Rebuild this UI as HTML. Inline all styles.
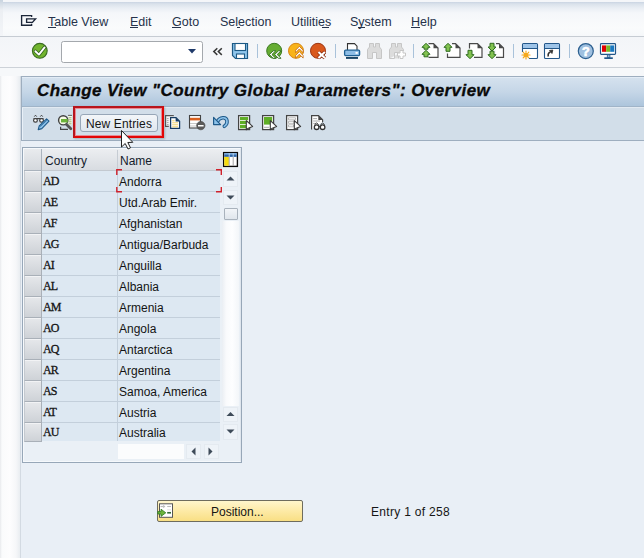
<!DOCTYPE html>
<html><head><meta charset="utf-8">
<style>
*{margin:0;padding:0;box-sizing:border-box}
html,body{width:644px;height:558px;overflow:hidden;background:#f8f9fb;font-family:"Liberation Sans",sans-serif;font-size:12px;color:#222}
.a{position:absolute}
svg{position:absolute;overflow:visible}
.m{position:absolute;top:14px;font-size:12.5px;line-height:16px;color:#26324a;white-space:pre}
.u{position:absolute;height:1px;background:#26324a}
.sep{position:absolute;top:44px;width:1px;height:14px;background:#a9c2da}
.txt{position:absolute;white-space:pre;line-height:14px}
</style></head><body>
<!-- menubar -->
<div class="a" style="left:0;top:0;width:644px;height:37px;background:linear-gradient(#f4f6f9 0,#f4f6f9 2px,#c9d4e2 2px,#dae2eb 4px,#e9eef4 8px,#f5f7fa 13px,#fafbfc 28px,#f6f8fa 36px);border-bottom:1px solid #c6ccd3"></div>
<div class="a" style="left:0;top:0;width:3px;height:36px;background:linear-gradient(#c9d4e0,#eceff3 10px,#f3f5f8 36px)"></div>
<svg style="left:0;top:0" width="40" height="30">
  <path d="M31.6,17 V15.6 H21.6 V25.2 H31.6 V23.8" fill="none" stroke="#1c2639" stroke-width="1.35"/>
  <path d="M26.6,18.8 H35.6 L32.4,22.4 H26.6 Z" fill="none" stroke="#1c2639" stroke-width="1.35"/>
</svg>
<div class="m" style="left:48px">Table View</div><div class="u" style="left:48px;top:27px;width:8px"></div>
<div class="m" style="left:130px">Edit</div><div class="u" style="left:130px;top:27px;width:8px"></div>
<div class="m" style="left:172px">Goto</div><div class="u" style="left:172px;top:27px;width:9px"></div>
<div class="m" style="left:220px">Selection</div><div class="u" style="left:237px;top:27px;width:3px"></div>
<div class="m" style="left:291px">Utilities</div><div class="u" style="left:322px;top:27px;width:7px"></div>
<div class="m" style="left:350px">System</div><div class="u" style="left:358px;top:27px;width:7px"></div>
<div class="m" style="left:411px">Help</div><div class="u" style="left:411px;top:27px;width:9px"></div>

<!-- system toolbar -->
<div class="a" style="left:0;top:37px;width:644px;height:31px;background:linear-gradient(#f3f5f8,#f7f8fa);border-bottom:1px solid #cdd2d8"></div>
<div class="a" style="left:0;top:68px;width:644px;height:8px;background:#f6f8fa"></div>
<svg style="left:0;top:0" width="644" height="70">
  <!-- check -->
  <circle cx="39.8" cy="50.8" r="7.4" fill="#72b52e" stroke="#3a6c22" stroke-width="1.1"/>
  <path d="M35.4,51.2 L38.9,54.6 L44.6,47.4" fill="none" stroke="#2f5e1c" stroke-width="3.4" stroke-linecap="round" stroke-linejoin="round"/>
  <path d="M35.4,51.2 L38.9,54.6 L44.6,47.4" fill="none" stroke="#fff" stroke-width="1.9" stroke-linecap="round" stroke-linejoin="round"/>
  <!-- combo -->
  <rect x="61.5" y="41.5" width="141" height="21" rx="2" fill="#fff" stroke="#a4a8ad"/>
  <path d="M188,49 H196 L192,53.5 Z" fill="#1f3a6a"/>
  <!-- << -->
  <path d="M217.3,48.3 L213.8,51.6 L217.3,54.9 M221.8,48.3 L218.3,51.6 L221.8,54.9" fill="none" stroke="#383838" stroke-width="1.5"/>
  <!-- save -->
  <path d="M232.5,43.5 H247.5 V58.5 H235.5 L232.5,55.5 Z" fill="#8fc6ec" stroke="#1d5a85" stroke-width="1.2"/>
  <rect x="235" y="43.5" width="10.5" height="7" fill="#fff" stroke="#1d5a85" stroke-width="1.1"/>
  <rect x="236.5" y="54" width="8" height="4.5" fill="#fff" stroke="#1d5a85" stroke-width="1.1"/>
  <!-- green back -->
  <circle cx="274.2" cy="50.8" r="7.5" fill="#66ad33" stroke="#3b7a22" stroke-width="1"/>
  <path d="M273.2,50.8 L269.3,54.55 L273.2,58.3 H275.8 L271.90000000000003,54.55 L275.8,50.8 Z M278.5,50.8 L274.6,54.55 L278.5,58.3 H281.1 L277.20000000000005,54.55 L281.1,50.8 Z" fill="#fff" stroke="#2f6a1c" stroke-width="0.9" stroke-linejoin="miter"/>
  <!-- orange exit -->
  <circle cx="296" cy="50.8" r="7.5" fill="#f8b31a" stroke="#d68516" stroke-width="1"/>
  <path d="M295.6,50.199999999999996 L299.35,46.3 L303.1,50.199999999999996 V52.8 L299.35,48.9 L295.6,52.8 Z M295.6,55.5 L299.35,51.6 L303.1,55.5 V58.1 L299.35,54.2 L295.6,58.1 Z" fill="#fff" stroke="#c8701a" stroke-width="0.9"/>
  <!-- red cancel -->
  <circle cx="318" cy="50.8" r="7.5" fill="#d9581c" stroke="#9c3512" stroke-width="1"/>
  <path d="M318.5,52 L324.8,58 M324.8,52 L318.5,58" fill="none" stroke="#8a2a0c" stroke-width="3.6"/>
  <path d="M318.5,52 L324.8,58 M324.8,52 L318.5,58" fill="none" stroke="#fff" stroke-width="2"/>
  <!-- printer -->
  <path d="M347.5,50 V43.6 H354.5 L357,46.2 V50" fill="#fff" stroke="#333" stroke-width="1.1"/>
  <rect x="344.6" y="50.2" width="15" height="5.4" rx="1" fill="#8dbde6" stroke="#1f6194" stroke-width="1.3"/>
  <rect x="355.5" y="52" width="2.3" height="1.8" fill="#fff"/>
  <rect x="346" y="57" width="12" height="1.9" fill="#1a4566"/>
  <!-- binoculars grey -->
  <path d="M367.5,58.5 V49.5 L369.5,47 V43.5 H373.5 V47 H375.5 V43.5 H379.5 V47 L381.5,49.5 V58.5 H376.5 V52.5 H372.5 V58.5 Z" fill="#dcdcdc" stroke="#c6c6c6" stroke-width="1"/>
  <path d="M389.5,58.5 V49.5 L391.5,47 V43.5 H395.5 V47 H397.5 V43.5 H401.5 V47 L403.5,49.5 V51 M398.5,58.5 V52.5 H394.5 V58.5 H389.5" fill="#dcdcdc" stroke="#c6c6c6" stroke-width="1"/>
  <path d="M400,50.5 H403 V53 H405.5 V56 H403 V58.5 H400 V56 H397.5 V53 H400 Z" fill="#fff" stroke="#c6c6c6" stroke-width="1"/>
  <!-- page nav icons -->
  <g fill="#fff" stroke="#4a4a4a" stroke-width="1.2">
    <path d="M428.5,43.6 H433.5 L438,48 V57.4 H428.5"/>
    <path d="M452,43.6 H455.5 L460,48 V57.4 H447.5 V53.5"/>
    <path d="M469.5,48.5 V43.6 H477.5 L482,48 V57.4 H474"/>
    <path d="M496,43.6 H499 L503.5,48 V57.4 H496"/>
  </g>
  <path d="M433.5,43.5 L438.3,48.3 H433.5 Z M455.5,43.5 L460.3,48.3 H455.5 Z M477.5,43.5 L482.3,48.3 H477.5 Z M499,43.5 L503.8,48.3 H499 Z" fill="#4a4a4a"/>
  <g fill="#82c250" stroke="#2e6b1f" stroke-width="1">
    <path d="M426,43.3 L430,47.3 H428 V49.2 H424 V47.3 H422 Z"/>
    <path d="M426,50.3 L430,54.3 H428 V56.8 H424 V54.3 H422 Z"/>
    <path d="M448,43.3 L452,47.3 H450 V51.3 H446 V47.3 H444 Z"/>
    <path d="M470,58.7 L474,54.7 H472 V50.3 H468 V54.7 H466 Z"/>
    <path d="M492,51 L496,47 H494 V43.3 H490 V47 H488 Z"/>
    <path d="M492,58.7 L496,54.7 H494 V51.2 H490 V54.7 H488 Z"/>
  </g>
  <!-- window sun -->
  <path d="M522.5,52 V44.5 Q522.5,43.5 523.5,43.5 H536.5 Q537.5,43.5 537.5,44.5 V57.5 Q537.5,58.5 536.5,58.5 H529" fill="#fff" stroke="#23578a" stroke-width="1.1"/>
  <rect x="523" y="44" width="14" height="4.2" fill="#9ec4e8"/>
  <line x1="522.5" y1="48.5" x2="537.5" y2="48.5" stroke="#23578a" stroke-width="1"/>
  <circle cx="526" cy="55" r="2.6" fill="#f5a81a"/>
  <g stroke="#f5a81a" stroke-width="1.2" stroke-linecap="round"><path d="M526,51 V52 M526,58 V59 M522,55 H523 M529,55 H530 M523.2,52.2 L523.8,52.8 M528.2,57.2 L528.8,57.8 M528.8,52.2 L528.2,52.8 M523.8,57.2 L523.2,57.8"/></g>
  <!-- window arrow -->
  <path d="M544.5,44.5 Q544.5,43.5 545.5,43.5 H558.5 Q559.5,43.5 559.5,44.5 V57.5 Q559.5,58.5 558.5,58.5 H545.5 Q544.5,58.5 544.5,57.5 Z" fill="#fff" stroke="#23578a" stroke-width="1.1"/>
  <rect x="545" y="44" width="14" height="4.2" fill="#9ec4e8"/>
  <line x1="544.5" y1="48.5" x2="559.5" y2="48.5" stroke="#23578a" stroke-width="1"/>
  <path d="M548.3,56.5 Q547.5,53 550.5,52" fill="none" stroke="#333" stroke-width="1.6"/>
  <path d="M549.5,50.5 L552.8,50 L552,53.5 Z" fill="#333" stroke="#333" stroke-width="0.8"/>
  <!-- help -->
  <circle cx="585.8" cy="51.1" r="7.5" fill="#9fc0e0" stroke="#2c5f8f" stroke-width="1.2"/>
  <text x="585.9" y="55.9" font-family="Liberation Sans" font-weight="bold" font-size="12.5" fill="#fff" stroke="#fff" stroke-width="0.7" text-anchor="middle">?</text>
  <!-- monitor -->
  <rect x="600.5" y="43.6" width="15" height="10.8" rx="0.8" fill="#fff" stroke="#23578a" stroke-width="1.2"/>
  <rect x="602" y="45.4" width="4.2" height="6.4" fill="#e00000"/><rect x="606.2" y="45.4" width="4" height="6.4" fill="#7ab828"/><rect x="610.2" y="45.4" width="4" height="6.4" fill="#1a78c0"/>
  <rect x="607.3" y="54.8" width="2.6" height="2.6" fill="#9fc0e0" stroke="#23578a" stroke-width="0.8"/>
  <rect x="604.3" y="57.3" width="8.5" height="1.7" fill="#23578a"/>
</svg>
<div class="sep" style="left:257px"></div>
<div class="sep" style="left:335px"></div>
<div class="sep" style="left:413px"></div>
<div class="sep" style="left:513px"></div>
<div class="sep" style="left:569px"></div>

<!-- main panel -->
<div class="a" style="left:0;top:76px;width:20px;height:482px;background:linear-gradient(90deg,#e8eaed 0,#fafbfc 2px,#fdfdfe 10px,#f6f7f9 16px,#e9edf1 20px)"></div>
<div class="a" style="left:20px;top:76px;width:624px;height:482px;background:#e9eff6;border-left:1px solid #d3dae2"></div>
<div class="a" style="left:21px;top:76px;width:623px;height:65px;border:1px solid #9eaebf;border-right:none;background:#d2dee9"></div>
<div class="a" style="left:22px;top:77px;width:622px;height:30px;background:linear-gradient(#d4e1ee,#c5d6e7 50%,#adc5dc);border-bottom:1px solid #a0b4c8;border-top:1px solid #e2ecf6"></div>
<div class="a" style="left:22px;top:107px;width:1px;height:33px;background:#e8f0f8"></div>
<div class="a" style="left:22px;top:107px;width:622px;height:1px;background:#e2eaf2"></div>
<div class="txt" style="left:37px;top:82px;font-size:17px;line-height:18px;font-weight:bold;font-style:italic;color:#0a0a0a;letter-spacing:0.43px;-webkit-text-stroke:0.3px #0a0a0a">Change View "Country Global Parameters": Overview</div>

<!-- app toolbar icons -->
<svg style="left:0;top:0" width="340" height="140">
  <!-- glasses + pencil -->
  <g fill="none" stroke="#404040" stroke-width="1.2">
    <path d="M33.6,118.6 H43.4"/>
    <rect x="33.6" y="118.6" width="3.7" height="3.6" rx="1.6" fill="#fff"/>
    <rect x="39.7" y="118.6" width="3.7" height="3.6" rx="1.6" fill="#fff"/>
    <path d="M34.3,116.6 L35.5,115.2 L36.7,116.6 M40.3,116.6 L41.5,115.2 L42.7,116.6" stroke-width="1"/>
  </g>
  <path d="M38.2,129.6 L39.2,126 L46.6,118.8 L49,121.2 L41.8,128.6 Z" fill="#8cc2ea" stroke="#1f5a8a" stroke-width="1.1" stroke-linejoin="round"/>
  <path d="M40.2,126.6 L47.4,119.8" stroke="#2a6a9c" stroke-width="0.8"/>
  <!-- display w/ magnifier -->
  <path d="M68,115.4 H72" stroke="#444" stroke-width="1"/>
  <rect x="68" y="115.8" width="4" height="9" fill="#f4f7e8"/>
  <path d="M68.5,117.8 H71.5 M68.5,119.8 H71.5 M68.5,121.8 H71.5 M68.5,123.8 H71.5" stroke="#8fae6a" stroke-width="0.9"/>
  <path d="M60.6,126.8 V129.4 H68" fill="none" stroke="#444" stroke-width="1.2"/>
  <circle cx="63.2" cy="120.3" r="4.6" fill="#f7fbe6" stroke="#404040" stroke-width="1.4"/>
  <rect x="61" y="119" width="6.8" height="3.4" fill="#6cb43a"/>
  <path d="M66.6,124.6 L70.8,128.8" stroke="#555" stroke-width="2.8" stroke-linecap="round"/>
  <!-- copy -->
  <path d="M173.8,115.6 H165.6 V126.4 H168.8" fill="#f4f6f8" stroke="#555" stroke-width="1.1"/>
  <path d="M166.8,118.6 H168.6 M166.8,120.6 H168.6 M166.8,122.6 H168.6 M166.8,124.6 H168.6" stroke="#9a9a9a" stroke-width="0.9"/>
  <path d="M170.6,117.6 H176 L179.6,121.2 V128.4 H170.6 Z" fill="#fff" stroke="#163c63" stroke-width="1.25"/>
  <path d="M175.6,117.4 L179.8,121.6 H175.6 Z" fill="#163c63"/>
  <path d="M172.2,120.8 H174.6 M172.2,122.8 H178 M172.2,124.8 H178 M172.2,126.8 H178" stroke="#f0d46a" stroke-width="1"/>
  <!-- delete row -->
  <rect x="189.5" y="115.5" width="11" height="12.5" fill="#fff" stroke="#444" stroke-width="1.1"/>
  <rect x="190" y="117.8" width="10" height="2.6" fill="#d9601f"/>
  <path d="M190,123.5 H197 M190,126 H196" stroke="#bbb" stroke-width="0.8"/>
  <circle cx="200.8" cy="125.6" r="4.2" fill="#5a5a5a" stroke="#444" stroke-width="0.6"/>
  <rect x="198" y="125" width="5.6" height="1.5" fill="#fff"/>
  <!-- undo -->
  <path d="M217.5,121.5 C219.5,117 226.5,116.2 227,121 C227.3,123.8 225.5,125.5 224.3,126.3" fill="none" stroke="#1f5a8a" stroke-width="3.6" stroke-linecap="round"/>
  <path d="M217.5,121.5 C219.5,117 226.5,116.2 227,121 C227.3,123.8 225.5,125.5 224.3,126.3" fill="none" stroke="#8cc2ea" stroke-width="1.6" stroke-linecap="round"/>
  <path d="M213.6,117.4 V124.6 H220.6 Z" fill="#8cc2ea" stroke="#1f5a8a" stroke-width="1.2" stroke-linejoin="round"/>
  <!-- select all -->
  <rect x="238.6" y="115.6" width="11" height="14" fill="#fff" stroke="#444" stroke-width="1.25"/>
  <rect x="240" y="117" width="8.2" height="3.2" fill="#5fae26"/><rect x="240" y="121" width="8.2" height="3.2" fill="#5fae26"/><rect x="240" y="125" width="8.2" height="3.3" fill="#5fae26"/>
  <path d="M246.3,120.6 V129.79999999999998 L248.3,128.2 L252.60000000000002,126.39999999999999 Z" fill="#fff" stroke="#3a3a3a" stroke-width="1.1" stroke-linejoin="round"/>
  <rect x="262.6" y="115.6" width="11" height="14" fill="#fff" stroke="#444" stroke-width="1.25"/>
  <rect x="264" y="117" width="8.2" height="7.6" fill="#5fae26"/>
  <path d="M264,127.3 H269" stroke="#aaa" stroke-width="1"/>
  <path d="M270.3,120.6 V129.79999999999998 L272.3,128.2 L276.6,126.39999999999999 Z" fill="#fff" stroke="#3a3a3a" stroke-width="1.1" stroke-linejoin="round"/>
  <rect x="286.6" y="115.6" width="11" height="14" fill="#fff" stroke="#444" stroke-width="1.25"/>
  <path d="M288.5,117.8 H295.5 V119.8 H288.5 Z M288.5,121.3 H294 V123.3 H288.5 Z M288.5,124.8 H293.5 V126.8 H288.5 Z" fill="none" stroke="#a8a8a8" stroke-width="0.8"/>
  <path d="M294.3,120.6 V129.79999999999998 L296.3,128.2 L300.6,126.39999999999999 Z" fill="#fff" stroke="#3a3a3a" stroke-width="1.1" stroke-linejoin="round"/>
  <path d="M311.6,129.6 V115.6 H318.5 L322.6,119.7 V122" fill="#fff" stroke="#444" stroke-width="1.2"/>
  <path d="M318.3,115.4 L322.8,119.9 H318.3 Z" fill="#444"/>
  <path d="M313.2,118.6 H317 M313.2,121 H320 M313.2,123.4 H316" stroke="#a0a0a0" stroke-width="0.9"/>
  <path d="M314.6,124.6 L316.6,123 L318.6,124.6 M320.6,124.6 L322.6,123 L324.6,124.6" fill="none" stroke="#333" stroke-width="1"/>
  <circle cx="316.6" cy="127.2" r="2.3" fill="#fff" stroke="#333" stroke-width="1.3"/>
  <circle cx="322.6" cy="127.2" r="2.3" fill="#fff" stroke="#333" stroke-width="1.3"/>
  <path d="M318.9,126.4 H320.3" stroke="#333" stroke-width="1"/>
</svg>
<!-- New Entries -->
<div class="a" style="left:73px;top:106px;width:91px;height:32px;border:2px solid;border-color:#b8141c #e20606 #e20606 #b8141c;box-shadow:inset 0 0 0 1px rgba(240,110,120,0.75),1px 1px 2px rgba(0,0,0,0.22)"></div>
<div class="a" style="left:80px;top:114px;width:78px;height:18px;border:1px solid #97a6b7;border-radius:3px;background:linear-gradient(#f3f6f9,#dfe6ee)"></div>
<div class="txt" style="left:86px;top:117px;font-size:12px;color:#151515;letter-spacing:0.12px">New Entries</div>

<!-- table -->
<div class="a" style="left:22px;top:147px;width:220px;height:316px;border:1px solid #97a7b8;background:#eaf0f6"></div>
<div class="a" style="left:23px;top:148px;width:218px;height:314px;border:1px solid #f6f9fc;border-right-color:#dfe6ee"></div>
<div class="a" style="left:24px;top:149px;width:18px;height:22px;background:linear-gradient(#e9ebee,#d4d8dd);border-right:1px solid #aab3bd;border-bottom:1px solid #aab3bd"></div>
<div class="a" style="left:42px;top:149px;width:180px;height:22px;background:linear-gradient(#eceef1,#d8dce1);border-bottom:1px solid #c3c9d0"></div>
<div class="a" style="left:117px;top:150px;width:1px;height:20px;background:#c6ccd3"></div>
<div class="txt" style="left:45px;top:154px;font-size:12px;color:#141c2c">Country</div>
<div class="txt" style="left:120px;top:154px;font-size:12px;color:#141c2c">Name</div>

<div class="a" style="left:24px;top:171px;width:18px;height:21px;background:linear-gradient(#e6e8eb,#ced2d7);border-right:1px solid #a9b0b8;border-bottom:1px solid #a9b0b8;border-left:1px solid #c4c9cf;box-shadow:inset 0 1px 0 #f2f3f5"></div>
<div class="a" style="left:42px;top:171px;width:178px;height:21px;background:#dde8f2;border-bottom:1px solid #c3cfdb;"></div>
<div class="a" style="left:117px;top:171px;width:1px;height:21px;background:#c3cfdb"></div>
<div class="txt" style="left:43px;top:174px;font-family:'Liberation Serif';font-size:12px;color:#141414;letter-spacing:-0.9px;-webkit-text-stroke:0.3px #141414">AD</div>
<div class="txt" style="left:119px;top:175px;font-size:12px;color:#141414">Andorra</div>
<div class="a" style="left:24px;top:192px;width:18px;height:21px;background:linear-gradient(#e6e8eb,#ced2d7);border-right:1px solid #a9b0b8;border-bottom:1px solid #a9b0b8;border-left:1px solid #c4c9cf;box-shadow:inset 0 1px 0 #f2f3f5"></div>
<div class="a" style="left:42px;top:192px;width:178px;height:21px;background:#dde8f2;border-bottom:1px solid #c3cfdb;"></div>
<div class="a" style="left:117px;top:192px;width:1px;height:21px;background:#c3cfdb"></div>
<div class="txt" style="left:43px;top:195px;font-family:'Liberation Serif';font-size:12px;color:#141414;letter-spacing:-0.9px;-webkit-text-stroke:0.3px #141414">AE</div>
<div class="txt" style="left:119px;top:196px;font-size:12px;color:#141414">Utd.Arab Emir.</div>
<div class="a" style="left:24px;top:213px;width:18px;height:21px;background:linear-gradient(#e6e8eb,#ced2d7);border-right:1px solid #a9b0b8;border-bottom:1px solid #a9b0b8;border-left:1px solid #c4c9cf;box-shadow:inset 0 1px 0 #f2f3f5"></div>
<div class="a" style="left:42px;top:213px;width:178px;height:21px;background:#dde8f2;border-bottom:1px solid #c3cfdb;"></div>
<div class="a" style="left:117px;top:213px;width:1px;height:21px;background:#c3cfdb"></div>
<div class="txt" style="left:43px;top:216px;font-family:'Liberation Serif';font-size:12px;color:#141414;letter-spacing:-0.9px;-webkit-text-stroke:0.3px #141414">AF</div>
<div class="txt" style="left:119px;top:217px;font-size:12px;color:#141414">Afghanistan</div>
<div class="a" style="left:24px;top:234px;width:18px;height:21px;background:linear-gradient(#e6e8eb,#ced2d7);border-right:1px solid #a9b0b8;border-bottom:1px solid #a9b0b8;border-left:1px solid #c4c9cf;box-shadow:inset 0 1px 0 #f2f3f5"></div>
<div class="a" style="left:42px;top:234px;width:178px;height:21px;background:#dde8f2;border-bottom:1px solid #c3cfdb;"></div>
<div class="a" style="left:117px;top:234px;width:1px;height:21px;background:#c3cfdb"></div>
<div class="txt" style="left:43px;top:237px;font-family:'Liberation Serif';font-size:12px;color:#141414;letter-spacing:-0.9px;-webkit-text-stroke:0.3px #141414">AG</div>
<div class="txt" style="left:119px;top:238px;font-size:12px;color:#141414">Antigua/Barbuda</div>
<div class="a" style="left:24px;top:255px;width:18px;height:21px;background:linear-gradient(#e6e8eb,#ced2d7);border-right:1px solid #a9b0b8;border-bottom:1px solid #a9b0b8;border-left:1px solid #c4c9cf;box-shadow:inset 0 1px 0 #f2f3f5"></div>
<div class="a" style="left:42px;top:255px;width:178px;height:21px;background:#dde8f2;border-bottom:1px solid #c3cfdb;"></div>
<div class="a" style="left:117px;top:255px;width:1px;height:21px;background:#c3cfdb"></div>
<div class="txt" style="left:43px;top:258px;font-family:'Liberation Serif';font-size:12px;color:#141414;letter-spacing:-0.9px;-webkit-text-stroke:0.3px #141414">AI</div>
<div class="txt" style="left:119px;top:259px;font-size:12px;color:#141414">Anguilla</div>
<div class="a" style="left:24px;top:276px;width:18px;height:21px;background:linear-gradient(#e6e8eb,#ced2d7);border-right:1px solid #a9b0b8;border-bottom:1px solid #a9b0b8;border-left:1px solid #c4c9cf;box-shadow:inset 0 1px 0 #f2f3f5"></div>
<div class="a" style="left:42px;top:276px;width:178px;height:21px;background:#dde8f2;border-bottom:1px solid #c3cfdb;"></div>
<div class="a" style="left:117px;top:276px;width:1px;height:21px;background:#c3cfdb"></div>
<div class="txt" style="left:43px;top:279px;font-family:'Liberation Serif';font-size:12px;color:#141414;letter-spacing:-0.9px;-webkit-text-stroke:0.3px #141414">AL</div>
<div class="txt" style="left:119px;top:280px;font-size:12px;color:#141414">Albania</div>
<div class="a" style="left:24px;top:297px;width:18px;height:21px;background:linear-gradient(#e6e8eb,#ced2d7);border-right:1px solid #a9b0b8;border-bottom:1px solid #a9b0b8;border-left:1px solid #c4c9cf;box-shadow:inset 0 1px 0 #f2f3f5"></div>
<div class="a" style="left:42px;top:297px;width:178px;height:21px;background:#dde8f2;border-bottom:1px solid #c3cfdb;"></div>
<div class="a" style="left:117px;top:297px;width:1px;height:21px;background:#c3cfdb"></div>
<div class="txt" style="left:43px;top:300px;font-family:'Liberation Serif';font-size:12px;color:#141414;letter-spacing:-0.9px;-webkit-text-stroke:0.3px #141414">AM</div>
<div class="txt" style="left:119px;top:301px;font-size:12px;color:#141414">Armenia</div>
<div class="a" style="left:24px;top:318px;width:18px;height:21px;background:linear-gradient(#e6e8eb,#ced2d7);border-right:1px solid #a9b0b8;border-bottom:1px solid #a9b0b8;border-left:1px solid #c4c9cf;box-shadow:inset 0 1px 0 #f2f3f5"></div>
<div class="a" style="left:42px;top:318px;width:178px;height:21px;background:#dde8f2;border-bottom:1px solid #c3cfdb;"></div>
<div class="a" style="left:117px;top:318px;width:1px;height:21px;background:#c3cfdb"></div>
<div class="txt" style="left:43px;top:321px;font-family:'Liberation Serif';font-size:12px;color:#141414;letter-spacing:-0.9px;-webkit-text-stroke:0.3px #141414">AO</div>
<div class="txt" style="left:119px;top:322px;font-size:12px;color:#141414">Angola</div>
<div class="a" style="left:24px;top:339px;width:18px;height:21px;background:linear-gradient(#e6e8eb,#ced2d7);border-right:1px solid #a9b0b8;border-bottom:1px solid #a9b0b8;border-left:1px solid #c4c9cf;box-shadow:inset 0 1px 0 #f2f3f5"></div>
<div class="a" style="left:42px;top:339px;width:178px;height:21px;background:#dde8f2;border-bottom:1px solid #c3cfdb;"></div>
<div class="a" style="left:117px;top:339px;width:1px;height:21px;background:#c3cfdb"></div>
<div class="txt" style="left:43px;top:342px;font-family:'Liberation Serif';font-size:12px;color:#141414;letter-spacing:-0.9px;-webkit-text-stroke:0.3px #141414">AQ</div>
<div class="txt" style="left:119px;top:343px;font-size:12px;color:#141414">Antarctica</div>
<div class="a" style="left:24px;top:360px;width:18px;height:21px;background:linear-gradient(#e6e8eb,#ced2d7);border-right:1px solid #a9b0b8;border-bottom:1px solid #a9b0b8;border-left:1px solid #c4c9cf;box-shadow:inset 0 1px 0 #f2f3f5"></div>
<div class="a" style="left:42px;top:360px;width:178px;height:21px;background:#dde8f2;border-bottom:1px solid #c3cfdb;"></div>
<div class="a" style="left:117px;top:360px;width:1px;height:21px;background:#c3cfdb"></div>
<div class="txt" style="left:43px;top:363px;font-family:'Liberation Serif';font-size:12px;color:#141414;letter-spacing:-0.9px;-webkit-text-stroke:0.3px #141414">AR</div>
<div class="txt" style="left:119px;top:364px;font-size:12px;color:#141414">Argentina</div>
<div class="a" style="left:24px;top:381px;width:18px;height:21px;background:linear-gradient(#e6e8eb,#ced2d7);border-right:1px solid #a9b0b8;border-bottom:1px solid #a9b0b8;border-left:1px solid #c4c9cf;box-shadow:inset 0 1px 0 #f2f3f5"></div>
<div class="a" style="left:42px;top:381px;width:178px;height:21px;background:#dde8f2;border-bottom:1px solid #c3cfdb;"></div>
<div class="a" style="left:117px;top:381px;width:1px;height:21px;background:#c3cfdb"></div>
<div class="txt" style="left:43px;top:384px;font-family:'Liberation Serif';font-size:12px;color:#141414;letter-spacing:-0.9px;-webkit-text-stroke:0.3px #141414">AS</div>
<div class="txt" style="left:119px;top:385px;font-size:12px;color:#141414">Samoa, America</div>
<div class="a" style="left:24px;top:402px;width:18px;height:21px;background:linear-gradient(#e6e8eb,#ced2d7);border-right:1px solid #a9b0b8;border-bottom:1px solid #a9b0b8;border-left:1px solid #c4c9cf;box-shadow:inset 0 1px 0 #f2f3f5"></div>
<div class="a" style="left:42px;top:402px;width:178px;height:21px;background:#dde8f2;border-bottom:1px solid #c3cfdb;"></div>
<div class="a" style="left:117px;top:402px;width:1px;height:21px;background:#c3cfdb"></div>
<div class="txt" style="left:43px;top:405px;font-family:'Liberation Serif';font-size:12px;color:#141414;letter-spacing:-0.9px;-webkit-text-stroke:0.3px #141414">AT</div>
<div class="txt" style="left:119px;top:406px;font-size:12px;color:#141414">Austria</div>
<div class="a" style="left:24px;top:423px;width:18px;height:19px;background:linear-gradient(#e6e8eb,#ced2d7);border-right:1px solid #a9b0b8;border-bottom:1px solid #a9b0b8;border-left:1px solid #c4c9cf;box-shadow:inset 0 1px 0 #f2f3f5"></div>
<div class="a" style="left:42px;top:423px;width:178px;height:18px;background:#dde8f2;"></div>
<div class="a" style="left:117px;top:423px;width:1px;height:18px;background:#c3cfdb"></div>
<div class="txt" style="left:43px;top:425px;font-family:'Liberation Serif';font-size:12px;color:#141414;letter-spacing:-0.9px;-webkit-text-stroke:0.3px #141414">AU</div>
<div class="txt" style="left:119px;top:426px;font-size:12px;color:#141414">Australia</div>
<!-- focus brackets -->
<svg style="left:0;top:0" width="250" height="200">
  <path d="M122,169.8 H116.8 V175 M116.8,187 V191.8 H122 M216,169.8 H221.3 V175 M221.3,187 V191.8 H216" fill="none" stroke="#d0212b" stroke-width="1.4"/>
</svg>
<!-- column config icon -->
<svg style="left:0;top:0" width="250" height="200">
  <rect x="223.6" y="152.6" width="13.8" height="13.8" fill="#fff" stroke="#0a0a0a" stroke-width="1.35"/>
  <rect x="224.3" y="153.3" width="12.4" height="3.6" fill="#2f66a8"/>
  <rect x="224.3" y="153.3" width="12.4" height="1.2" fill="#8fc0ee"/>
  <rect x="224.3" y="156.9" width="4.6" height="8.8" fill="#f6dc10"/>
  <path d="M229.2,157 V165.8 M233.2,157 V165.8" stroke="#9a9a9a" stroke-width="0.9"/>
  <path d="M229.2,153.2 V157 M233.2,153.2 V157" stroke="#cfe3f5" stroke-width="0.8"/>
</svg>
<!-- vertical scrollbar -->
<div class="a" style="left:222px;top:221px;width:17px;height:185px;background:linear-gradient(90deg,#eaeef3,#f9fafc 25%,#fdfeff 60%,#f3f6f9)"></div>
<div class="a" style="left:223px;top:171px;width:15px;height:16px;background:#eef3f8;border:1px solid #e4eaf0"></div>
<div class="a" style="left:223px;top:190px;width:15px;height:15px;background:#eef3f8;border:1px solid #e4eaf0"></div>
<div class="a" style="left:224px;top:208px;width:14px;height:12px;background:linear-gradient(#f2f5f8,#e0e6ec);border:1px solid #a9b2bc;border-radius:1px"></div>
<div class="a" style="left:223px;top:407px;width:15px;height:15px;background:#eef3f8;border:1px solid #e4eaf0"></div>
<div class="a" style="left:223px;top:424px;width:15px;height:16px;background:#eef3f8;border:1px solid #e4eaf0"></div>
<svg style="left:0;top:0" width="250" height="470">
  <path d="M226.5,180.5 H234.5 L230.5,176.5 Z M226.5,195.5 H234.5 L230.5,199.5 Z M226.5,416 H234.5 L230.5,412 Z M226.5,429.5 H234.5 L230.5,433.5 Z" fill="#3e4b59"/>
</svg>
<!-- horizontal scrollbar -->
<div class="a" style="left:118px;top:444px;width:66px;height:15px;background:#fbfcfd"></div>
<div class="a" style="left:186px;top:444px;width:15px;height:15px;background:#eef3f8;border:1px solid #e4eaf0"></div>
<div class="a" style="left:204px;top:444px;width:15px;height:15px;background:#eef3f8;border:1px solid #e4eaf0"></div>
<svg style="left:0;top:0" width="250" height="470">
  <path d="M195.5,447.5 V455.5 L191.5,451.5 Z M208.5,447.5 V455.5 L212.5,451.5 Z" fill="#3e4b59"/>
</svg>
<!-- position button -->
<div class="a" style="left:157px;top:500px;width:146px;height:22px;border:1px solid #6e6c5e;border-radius:2px;background:linear-gradient(#fff6cc,#fdeaa6 50%,#f9df84)"></div>
<svg style="left:0;top:0" width="200" height="530">
  <rect x="159.5" y="503.8" width="13" height="13.5" fill="#fff" stroke="#555" stroke-width="1"/>
  <path d="M160.5,506.5 H163.5" stroke="#bbb" stroke-width="1.2"/>
  <path d="M163.2,504.8 L165.4,506.5 L163.2,508.2 Z" fill="#bbb"/>
  <path d="M167.2,506.5 H171" stroke="#bbb" stroke-width="1.1"/>
  <path d="M167.2,509.5 H171 M167.2,511 H171" stroke="#e4e4e4" stroke-width="0.8"/>
  <path d="M157.8,511.6 H161 V509.2 L165.8,512.8 L161,516.4 V514 H157.8 Z" fill="#6cb43c" stroke="#2f7a22" stroke-width="0.8"/>
  <path d="M167.2,512.8 H171" stroke="#2f6a3a" stroke-width="1.6"/>
</svg>
<div class="txt" style="left:211px;top:505px;font-size:12px;color:#151515">Position...</div>
<div class="txt" style="left:371px;top:505px;font-size:12px;color:#151515;letter-spacing:0.3px">Entry 1 of 258</div>
<!-- cursor -->
<svg style="left:0;top:0" width="140" height="150">
  <path d="M121.5,130.5 V147 L125.2,143.5 L128,149 L130.5,147.8 L127.8,142.5 L132.8,142.3 Z" fill="#fff" stroke="#222" stroke-width="1"/>
</svg>
</body></html>
